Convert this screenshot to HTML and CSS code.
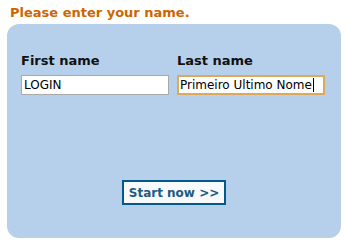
FILE: index.html
```html
<!DOCTYPE html>
<html>
<head>
<meta charset="utf-8">
<link rel="stylesheet" href="styles.css">
</head>
<body>
<h1 class="title">Please enter your name.</h1>
<div class="panel">
  <div class="fields">
    <div class="field">
      <label class="label" for="fn">First name</label>
      <input class="input" id="fn" type="text" value="LOGIN">
    </div>
    <div class="field">
      <label class="label" for="ln">Last name</label>
      <div class="input input-focus"><span>Primeiro Ultimo Nome</span><span class="caret"></span></div>
    </div>
  </div>
  <div class="actions">
    <button class="start" type="button">Start now &gt;&gt;</button>
  </div>
</div>
</body>
</html>
```
FILE: styles.css
```css
html, body {
  margin: 0;
  padding: 0;
  background: #ffffff;
}
body {
  font-family: "DejaVu Sans", Verdana, sans-serif;
  width: 347px;
  height: 246px;
  overflow: hidden;
}
.title {
  margin: 0;
  padding: 5px 0 0 10px;
  font-size: 13px;
  line-height: 16px;
  font-weight: bold;
  color: #cc6600;
}
.panel {
  margin: 3px 0 0 7px;
  width: 334px;
  height: 214px;
  box-sizing: border-box;
  background: #b6d0ec;
  border-radius: 12px;
  padding: 29px 0 0 14px;
}
.fields {
  display: flex;
  gap: 8px;
}
.field {
  display: flex;
  flex-direction: column;
  width: 148px;
}
.label {
  font-size: 13px;
  line-height: 16px;
  font-weight: bold;
  color: #111111;
  margin-bottom: 6px;
}
.input {
  box-sizing: border-box;
  width: 148px;
  height: 20px;
  margin: 0;
  padding: 0 2px;
  border: 1px solid #a9a9a9;
  background: #ffffff;
  font-family: "DejaVu Sans", Verdana, sans-serif;
  font-size: 12px;
  line-height: 18px;
  color: #000000;
  outline: none;
}
.input-focus {
  border: 2px solid #dcaa5a;
  padding: 0 1px;
  line-height: 16px;
  display: flex;
  align-items: center;
  white-space: nowrap;
  overflow: hidden;
}
.caret {
  display: inline-block;
  width: 1px;
  height: 14px;
  background: #000000;
  margin-left: 1px;
}
.actions {
  display: flex;
  justify-content: center;
  margin-top: 85px;
  padding-right: 14px;
}
.start {
  box-sizing: border-box;
  width: 104px;
  height: 25px;
  border: 2px solid #005a8c;
  background: #f7f9fa;
  color: #1c5a86;
  font-family: "DejaVu Sans", Verdana, sans-serif;
  font-size: 12px;
  font-weight: bold;
  padding: 0;
}
```
